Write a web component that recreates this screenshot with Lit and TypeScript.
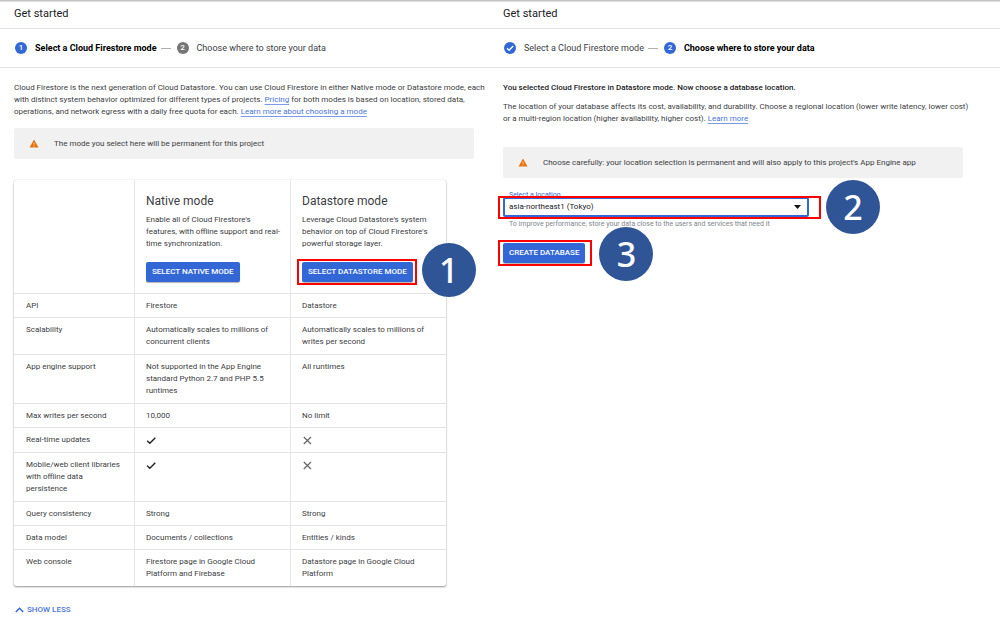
import { LitElement, html, css } from "lit";
import { customElement, property, state } from "lit/decorators.js";

type Cell = string | boolean;

interface FeatureRow {
  label: string;
  native: Cell;
  datastore: Cell;
}

const ROWS: FeatureRow[] = [
  { label: "API", native: "Firestore", datastore: "Datastore" },
  {
    label: "Scalability",
    native: "Automatically scales to millions of concurrent clients",
    datastore: "Automatically scales to millions of writes per second",
  },
  {
    label: "App engine support",
    native: "Not supported in the App Engine standard Python 2.7 and PHP 5.5 runtimes",
    datastore: "All runtimes",
  },
  { label: "Max writes per second", native: "10,000", datastore: "No limit" },
  { label: "Real-time updates", native: true, datastore: false },
  {
    label: "Mobile/web client libraries with offline data persistence",
    native: true,
    datastore: false,
  },
  { label: "Query consistency", native: "Strong", datastore: "Strong" },
  { label: "Data model", native: "Documents / collections", datastore: "Entities / kinds" },
  {
    label: "Web console",
    native: "Firestore page in Google Cloud Platform and Firebase",
    datastore: "Datastore page in Google Cloud Platform",
  },
];

const shared = css`
  * {
    box-sizing: border-box;
  }
  h1,
  h2,
  p,
  ol {
    margin: 0;
    padding: 0;
  }
  svg {
    display: block;
    flex: none;
  }
  a {
    color: #4a74dc;
    text-decoration: underline 1px #7d9ce6;
    text-underline-offset: 2px;
    text-decoration-skip-ink: none;
  }
  button {
    font-family: inherit;
    cursor: pointer;
  }
  .primary {
    display: block;
    height: 20px;
    padding: 0 6px;
    border: 0;
    border-radius: 2px;
    background: #3367d6;
    color: #fff;
    font-size: 8px;
    font-weight: 500;
    line-height: 20px;
    white-space: nowrap;
    box-shadow: 0 1px 1px rgba(0, 0, 0, 0.3);
  }
  .marked {
    position: relative;
    width: fit-content;
  }
  .outline {
    position: absolute;
    inset: -3px -4px -3px -5px;
    border: 2px solid #fe0000;
    pointer-events: none;
  }
`;

/** Numbered disc that points at a highlighted control. */
@customElement("callout-badge")
export class CalloutBadge extends LitElement {
  static styles = css`
    :host {
      display: grid;
      place-items: center;
      width: 54px;
      height: 54px;
      border-radius: 50%;
      background: #2f5597;
      color: #fff;
      font-family: "Noto Sans", "Open Sans", sans-serif;
      font-size: 34px;
      font-weight: 500;
      line-height: 54px;
    }
  `;
  render() {
    return html`<slot></slot>`;
  }
}

/** Two-step progress header. */
@customElement("setup-stepper")
export class SetupStepper extends LitElement {
  @property({ type: Number }) active = 1;

  static styles = [
    shared,
    css`
      .steps {
        display: flex;
        align-items: center;
        height: 39px;
        padding-left: 15px;
        border-bottom: 1px solid #e3e3e3;
        list-style: none;
        font-size: 9px;
        line-height: 12px;
        color: #3c4043;
      }
      .step {
        display: flex;
        align-items: center;
        gap: 8px;
        white-space: nowrap;
      }
      .step + .step::before {
        content: "";
        width: 10px;
        height: 1px;
        margin: 0 -2px 0 4px;
        background: #b0b0b0;
      }
      .disc {
        display: grid;
        place-items: center;
        width: 12px;
        height: 12px;
        border-radius: 50%;
        background: #757575;
        color: #fff;
        font-size: 8px;
        font-weight: 500;
      }
      .on .disc,
      .done .disc {
        background: #3367d6;
      }
      .on .title {
        color: #000;
        font-weight: 700;
      }
    `,
  ];

  render() {
    const titles = ["Select a Cloud Firestore mode", "Choose where to store your data"];
    return html`<ol class="steps">
      ${titles.map((title, i) => {
        const n = i + 1;
        const cls = n === this.active ? "on" : n < this.active ? "done" : "todo";
        return html`<li class="step ${cls}">
          <span class="disc"
            >${n < this.active
              ? html`<svg width="12" height="12" viewBox="0 0 12 12" aria-label="Done">
                  <path d="M3 6.2 5.1 8.3 9.2 4" fill="none" stroke="#fff" stroke-width="1.3" />
                </svg>`
              : n}</span
          ><span class="title">${title}</span>
        </li>`;
      })}
    </ol>`;
  }
}

/** Grey notice with a warning triangle. */
@customElement("warning-note")
export class WarningNote extends LitElement {
  static styles = css`
    :host {
      display: flex;
      align-items: center;
      gap: 15px;
      height: 31px;
      padding: 0 15px;
      border-radius: 2px;
      background: #f1f1f1;
      box-sizing: border-box;
    }
  `;
  render() {
    return html`<svg width="10" height="9" viewBox="0 0 10 9" aria-hidden="true">
        <path d="M5 .6 9.5 8.5H.5Z" fill="#e8710a" />
        <path d="M4.6 3.6h.8v2.2h-.8zM4.6 6.6h.8v.8h-.8z" fill="#fbe3cd" />
      </svg>
      <span><slot></slot></span>`;
  }
}

@customElement("mode-table")
export class ModeTable extends LitElement {
  static styles = [
    shared,
    css`
      .table {
        width: 100%;
        table-layout: fixed;
        border-collapse: separate;
        border-spacing: 0;
        border-radius: 2px;
        box-shadow: 0 1px 2px rgba(0, 0, 0, 0.4), 0 0 1px rgba(0, 0, 0, 0.2);
      }
      .features {
        width: 120px;
      }
      th,
      td {
        padding: 6px 8px 5px 12px;
        text-align: left;
        vertical-align: top;
        font-weight: 400;
      }
      .tall > * {
        padding-bottom: 6px;
      }
      th + *,
      td + * {
        border-left: 1px solid #e6e6e6;
        padding-left: 11px;
      }
      tbody th,
      tbody td {
        border-top: 1px solid #e3e3e3;
      }
      tbody th {
        padding-right: 12px;
      }
      .head {
        height: 113px;
        padding-top: 13px;
      }
      .mode {
        font-size: 12px;
        font-weight: 400;
        line-height: 16px;
        margin-bottom: 5px;
      }
      .about {
        margin-bottom: 12px;
      }
      .badge {
        position: absolute;
        left: calc(100% + 9px);
        top: -19px;
      }
    `,
  ];

  private cell(value: Cell) {
    if (value === true)
      return html`<svg width="11" height="13" viewBox="0 0 11 13" role="img" aria-label="Yes">
        <path d="M1.2 6.8 3.8 9.3 9.3 3.8" fill="none" stroke="#202124" stroke-width="1.4" />
      </svg>`;
    if (value === false)
      return html`<svg width="11" height="13" viewBox="0 0 11 13" role="img" aria-label="No">
        <path d="M1.8 3 9 10M9 3 1.8 10" fill="none" stroke="#666" stroke-width="1.2" />
      </svg>`;
    return value;
  }

  render() {
    return html`<table class="table">
      <colgroup>
        <col class="features" />
        <col />
        <col />
      </colgroup>
      <thead>
        <tr>
          <td class="head"></td>
          <th class="head" scope="col">
            <h2 class="mode">Native mode</h2>
            <p class="about">Enable all of Cloud Firestore's features, with offline support and real-time synchronization.</p>
            <button class="primary" type="button">SELECT NATIVE MODE</button>
          </th>
          <th class="head" scope="col">
            <h2 class="mode">Datastore mode</h2>
            <p class="about">Leverage Cloud Datastore's system behavior on top of Cloud Firestore's powerful storage layer.</p>
            <div class="marked">
              <button class="primary" type="button">SELECT DATASTORE MODE</button>
              <span class="outline"></span>
              <callout-badge class="badge">1</callout-badge>
            </div>
          </th>
        </tr>
      </thead>
      <tbody>
        ${ROWS.map((row) => {
          const tall = [row.label, row.native, row.datastore].some((c) => typeof c === "string" && c.length > 32);
          return html`<tr class=${tall ? "tall" : "short"}>
            <th scope="row">${row.label}</th>
            <td>${this.cell(row.native)}</td>
            <td>${this.cell(row.datastore)}</td>
          </tr>`;
        })}
      </tbody>
    </table>`;
  }
}

@customElement("app-root")
export class AppRoot extends LitElement {
  @state() private location = "asia-northeast1";

  static styles = [
    shared,
    css`
      :host {
        display: grid;
        grid-template-columns: 489fr 511fr;
        min-height: 100vh;
        box-sizing: border-box;
        border-top: 1px solid #c4c4c4;
        background: #fff;
        color: #3c4043;
        font-family: Roboto, "Liberation Sans", sans-serif;
        font-size: 8px;
        line-height: 12px;
      }
      .title {
        height: 28px;
        padding: 5px 14px 0;
        border-bottom: 1px solid #e3e3e3;
        box-shadow: inset 0 1px 0 #dedede;
        font-size: 11px;
        font-weight: 400;
        line-height: 16px;
        color: #202124;
      }
      .body {
        display: flex;
        flex-direction: column;
        align-items: stretch;
        padding: 14px 15px 10px 14px;
      }
      .intro {
        margin-right: -12px;
      }
      .right .body {
        padding-right: 37px;
      }
      .left .note {
        margin-top: 10px;
      }
      .modes {
        margin: 21px 28px 0 0;
      }
      .less {
        display: flex;
        align-items: center;
        gap: 3px;
        width: fit-content;
        margin-top: 18px;
        padding: 0 1px;
        border: 0;
        background: none;
        color: #4a74dc;
        font-size: 8px;
        font-weight: 500;
        line-height: 12px;
      }
      .lead {
        margin-bottom: 7px;
        font-weight: 500;
        color: #202124;
      }
      .right .note {
        margin-top: 22px;
      }
      .field {
        position: relative;
        margin: 19px 154px 0 0;
      }
      .label {
        position: absolute;
        left: 4px;
        top: -8px;
        padding: 0 2px;
        color: #3367d6;
        font-size: 7px;
      }
      .select {
        display: block;
        width: 100%;
        height: 20px;
        padding: 0 4px;
        border: 2px solid #3367d6;
        border-radius: 2px;
        background: #fff;
        appearance: none;
        color: #202124;
        font: inherit;
        outline: none;
      }
      .arrow {
        position: absolute;
        right: 8px;
        top: 8px;
        pointer-events: none;
      }
      .frame {
        inset: -1px -12px -2px -5px;
      }
      .two {
        position: absolute;
        left: calc(100% + 17px);
        top: -17px;
      }
      .hint {
        margin: 1px 6px 13px;
        color: #80868b;
        font-size: 7px;
      }
      .wide {
        right: -7px;
      }
      .three {
        position: absolute;
        left: calc(100% + 14px);
        top: -16px;
      }
    `,
  ];

  private pick(e: Event) {
    this.location = (e.target as HTMLSelectElement).value;
  }

  render() {
    return html`
      <section class="left">
        <h1 class="title">Get started</h1>
        <setup-stepper .active=${1}></setup-stepper>
        <div class="body">
          <p class="intro">
            Cloud Firestore is the next generation of Cloud Datastore. You can use Cloud Firestore in either Native mode
            or Datastore mode, each with distinct system behavior optimized for different types of projects.
            <a href="#pricing">Pricing</a> for both modes is based on location, stored data, operations, and network
            egress with a daily free quota for each. <a href="#modes">Learn more about choosing a mode</a>
          </p>
          <warning-note class="note">The mode you select here will be permanent for this project</warning-note>
          <mode-table class="modes"></mode-table>
          <button class="less" type="button">
            <svg width="9" height="8" viewBox="0 0 9 8" aria-hidden="true">
              <path d="M.8 6 4.5 2.3 8.2 6" fill="none" stroke="#3367d6" stroke-width="1.4" />
            </svg>
            SHOW LESS
          </button>
        </div>
      </section>
      <section class="right">
        <h1 class="title">Get started</h1>
        <setup-stepper .active=${2}></setup-stepper>
        <div class="body">
          <p class="lead">You selected Cloud Firestore in Datastore mode. Now choose a database location.</p>
          <p class="intro">
            The location of your database affects its cost, availability, and durability. Choose a regional location
            (lower write latency, lower cost) or a multi-region location (higher availability, higher cost).
            <a href="#locations">Learn more</a>
          </p>
          <warning-note class="note"
            >Choose carefully: your location selection is permanent and will also apply to this project's App Engine
            app</warning-note
          >
          <div class="field">
            <label class="label" for="location">Select a location</label>
            <select class="select" id="location" .value=${this.location} @change=${this.pick}>
              <option value="asia-northeast1">asia-northeast1 (Tokyo)</option>
            </select>
            <svg class="arrow" width="7" height="4" viewBox="0 0 7 4" aria-hidden="true">
              <path d="M0 0h7L3.5 4Z" fill="#111" />
            </svg>
            <span class="outline frame"></span>
            <callout-badge class="two">2</callout-badge>
          </div>
          <p class="hint">To improve performance, store your data close to the users and services that need it</p>
          <div class="marked">
            <button class="primary" type="button">CREATE DATABASE</button>
            <span class="outline wide"></span>
            <callout-badge class="three">3</callout-badge>
          </div>
        </div>
      </section>
    `;
  }
}
